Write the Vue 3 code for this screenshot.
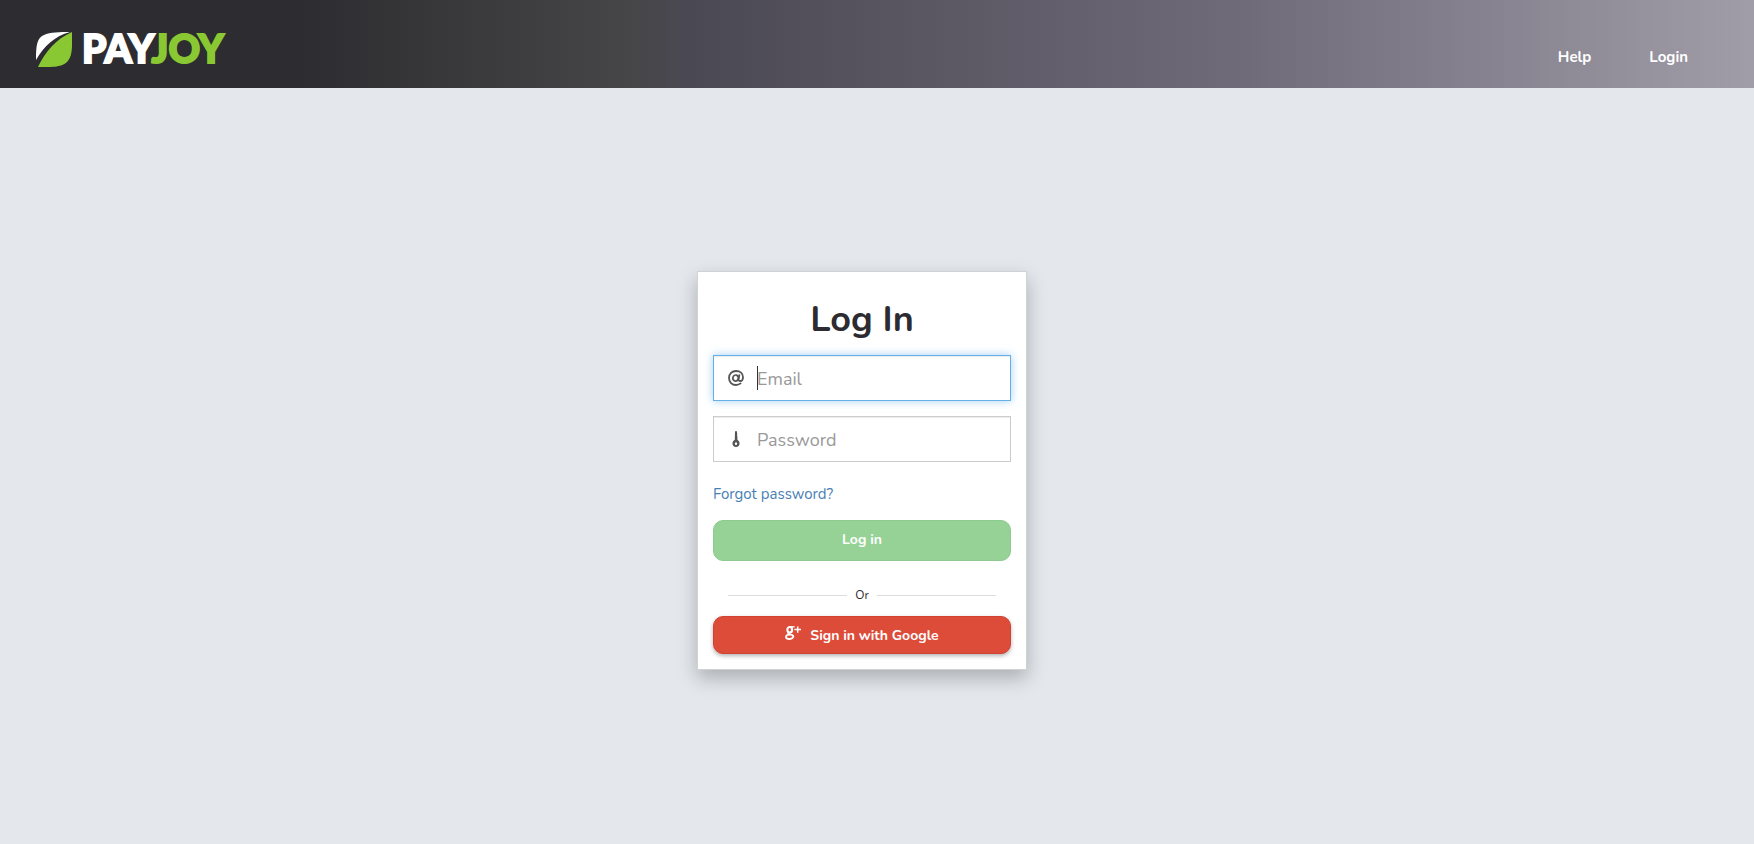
<template>
  <div class="page">
    <header class="topbar">
      <a href="#" class="logo" aria-label="PayJoy">
        <svg class="leaf" viewBox="0 0 36 35" aria-hidden="true">
          <path fill="#fff" d="M0 28 C0 13 1 6 8 3 C14 0 24 0 34 0 C19 4 8 14 0 28 Z" />
          <path fill="#8ac833" d="M36 0 C36 14 37 24 31 30 C25 36 13 35 2 35 C9 20 20 7 36 0 Z" />
        </svg>
        <span class="brand">PAY<span class="brand-joy">JOY</span></span>
      </a>
      <nav class="nav">
        <a href="#">Help</a>
        <a href="#">Login</a>
      </nav>
    </header>

    <main class="content">
      <form class="card" @submit.prevent>
        <h1>Log In</h1>

        <div class="field focused">
          <label for="email" aria-label="Email">
            <svg viewBox="0 0 16 16" aria-hidden="true">
              <g fill="none" stroke="#555" stroke-linecap="round">
                <path stroke-width="1.8" d="M12.6 13.4 C11.3 14.5 9.8 15 8 15 C4 15 1 12.1 1 8 C1 3.9 4 1 8 1 C12.1 1 15 3.6 15 7.2 C15 9.7 13.8 11 12.2 11 C10.9 11 10.4 10.2 10.6 9 L11.3 5.2" />
                <ellipse stroke-width="1.7" cx="7.6" cy="8" rx="2.7" ry="3" transform="rotate(15 7.6 8)" />
              </g>
            </svg>
          </label>
          <input id="email" v-model="email" type="email" placeholder="Email" />
          <span v-if="!email" class="caret"></span>
        </div>

        <div class="field">
          <label for="password" aria-label="Password">
            <svg viewBox="0 0 16 16" aria-hidden="true">
              <path fill="#555" fill-rule="evenodd" d="M7 0.5 Q8 -0.3 9 0.5 L9 2 L9.4 3 L9 4 L9.4 5.5 L9.4 8.8 Q11.6 10 11.6 12.3 Q11.4 16 8 16 Q4.6 16 4.4 12.3 Q4.4 10 6.8 8.8 Z M8 11.3 Q6.8 11.4 6.8 12.7 Q6.9 14 8 14 Q9.1 14 9.2 12.7 Q9.2 11.4 8 11.3 Z" />
            </svg>
          </label>
          <input id="password" v-model="password" type="password" placeholder="Password" />
        </div>

        <a href="#" class="forgot">Forgot password?</a>
        <button type="submit" class="btn btn-login">Log in</button>

        <div class="divider"><span>Or</span></div>

        <button type="button" class="btn btn-google">
          <svg viewBox="0 0 16 14" aria-hidden="true">
            <g fill="none" stroke="#fff">
              <ellipse stroke-width="2.1" cx="4.7" cy="3.8" rx="2.4" ry="2.8" />
              <path stroke-width="1.3" d="M5 0.8 H9.6" />
              <path stroke-width="1.9" d="M3.4 6.5 C2.6 7.5 3.8 7.9 5.4 8.3 C8 9 8.6 10 8.1 11.2 C7.1 13.7 1.2 13.7 1 11 C1 9.3 3 8.6 5.2 8.6 M6.8 1.5 L7.2 4" />
              <path stroke-width="1.5" d="M9.4 3.6 H16 M12.7 0.5 V6.7" />
            </g>
          </svg>
          <span>Sign in with Google</span>
        </button>
      </form>
    </main>
  </div>
</template>

<script setup>
import { ref } from 'vue'

const email = ref('')
const password = ref('')
</script>

<style>
body {
  background: #e4e7ec;
}
</style>

<style scoped>
.page {
  min-height: 100vh;
  font-family: Nunito, Lato, "Open Sans", sans-serif;
  color: #2c2b31;
}
.page * {
  box-sizing: border-box;
}
.topbar {
  display: flex;
  justify-content: space-between;
  height: 88px;
  padding: 0 66px 0 36px;
  background: linear-gradient(to right, #2d2c30 0%, #2d2c30 17%, #464648 36%, #4a4852 39%, #6f6b79 71%, #a09da8 100%);
}
.logo {
  display: flex;
  align-items: center;
  gap: 10px;
  padding-top: 10px;
  text-decoration: none;
}
.leaf {
  width: 36px;
  height: 35px;
}
.brand {
  padding-bottom: 3px;
  color: #fff;
  font-family: Lato, sans-serif;
  font-size: 39px;
  font-weight: 900;
  line-height: 40px;
  -webkit-text-stroke: 2px currentColor;
}
.brand-joy {
  color: #8ac833;
}
.nav {
  display: flex;
  gap: 58px;
  padding-top: 46px;
}
.nav a {
  color: #fff;
  font-size: 15px;
  font-weight: 700;
  line-height: 22px;
  text-decoration: none;
}
.content {
  display: flex;
  justify-content: center;
  padding: 183px 30px 40px 0;
}
.card {
  display: flex;
  flex-direction: column;
  width: 330px;
  padding: 23px 15px 15px;
  background: #fff;
  border: 1px solid #ccd5d4;
  box-shadow: 0 8px 18px rgba(0, 0, 0, 0.25);
}
h1 {
  margin: 0 0 10px;
  font-size: 36px;
  font-weight: 700;
  line-height: 50px;
  text-align: center;
}
.field {
  position: relative;
  display: flex;
  align-items: center;
  height: 46px;
  margin-bottom: 15px;
  border: 1px solid #ccc;
  box-shadow: inset 0 1px 1px rgba(0, 0, 0, 0.08);
}
.field.focused {
  border-color: #66afe9;
  box-shadow: inset 0 1px 1px rgba(0, 0, 0, 0.08), 0 0 8px rgba(102, 175, 233, 0.6);
}
.field label {
  display: flex;
  padding: 0 13px 0 14px;
}
.field svg {
  width: 16px;
  height: 16px;
}
.field input {
  flex: 1;
  min-width: 0;
  padding: 2px 0 0;
  border: 0;
  outline: 0;
  background: transparent;
  color: #555;
  font: 18px/24px Nunito, Lato, "Open Sans", sans-serif;
}
.field input::placeholder {
  color: #999;
  opacity: 1;
}
.caret {
  position: absolute;
  left: 43px;
  top: 10px;
  width: 1px;
  height: 24px;
  background: #333;
}
.forgot {
  align-self: flex-start;
  margin: 6px 0 15px;
  color: #4a7fb5;
  font-size: 15px;
  line-height: 22px;
  text-decoration: none;
}
.btn {
  display: flex;
  align-items: center;
  justify-content: center;
  gap: 9px;
  border: 1px solid transparent;
  border-radius: 10px;
  color: #fff;
  font-family: inherit;
  font-size: 14px;
  font-weight: 700;
}
.btn-login {
  height: 41px;
  padding-bottom: 4px;
  background: #96d296;
  border-color: #8dca8f;
}
.btn-google {
  height: 38px;
  background: #dd4b39;
  border-color: #d04333;
  box-shadow: 0 2px 4px rgba(0, 0, 0, 0.3);
}
.btn-google svg {
  width: 16px;
  height: 14px;
  margin-bottom: 4px;
}
.divider {
  display: flex;
  align-items: center;
  gap: 8px;
  margin: 25px 15px 12px;
  font-size: 12px;
  line-height: 18px;
}
.divider::before,
.divider::after {
  content: "";
  flex: 1;
  height: 1px;
  background: #ddd;
}
</style>
